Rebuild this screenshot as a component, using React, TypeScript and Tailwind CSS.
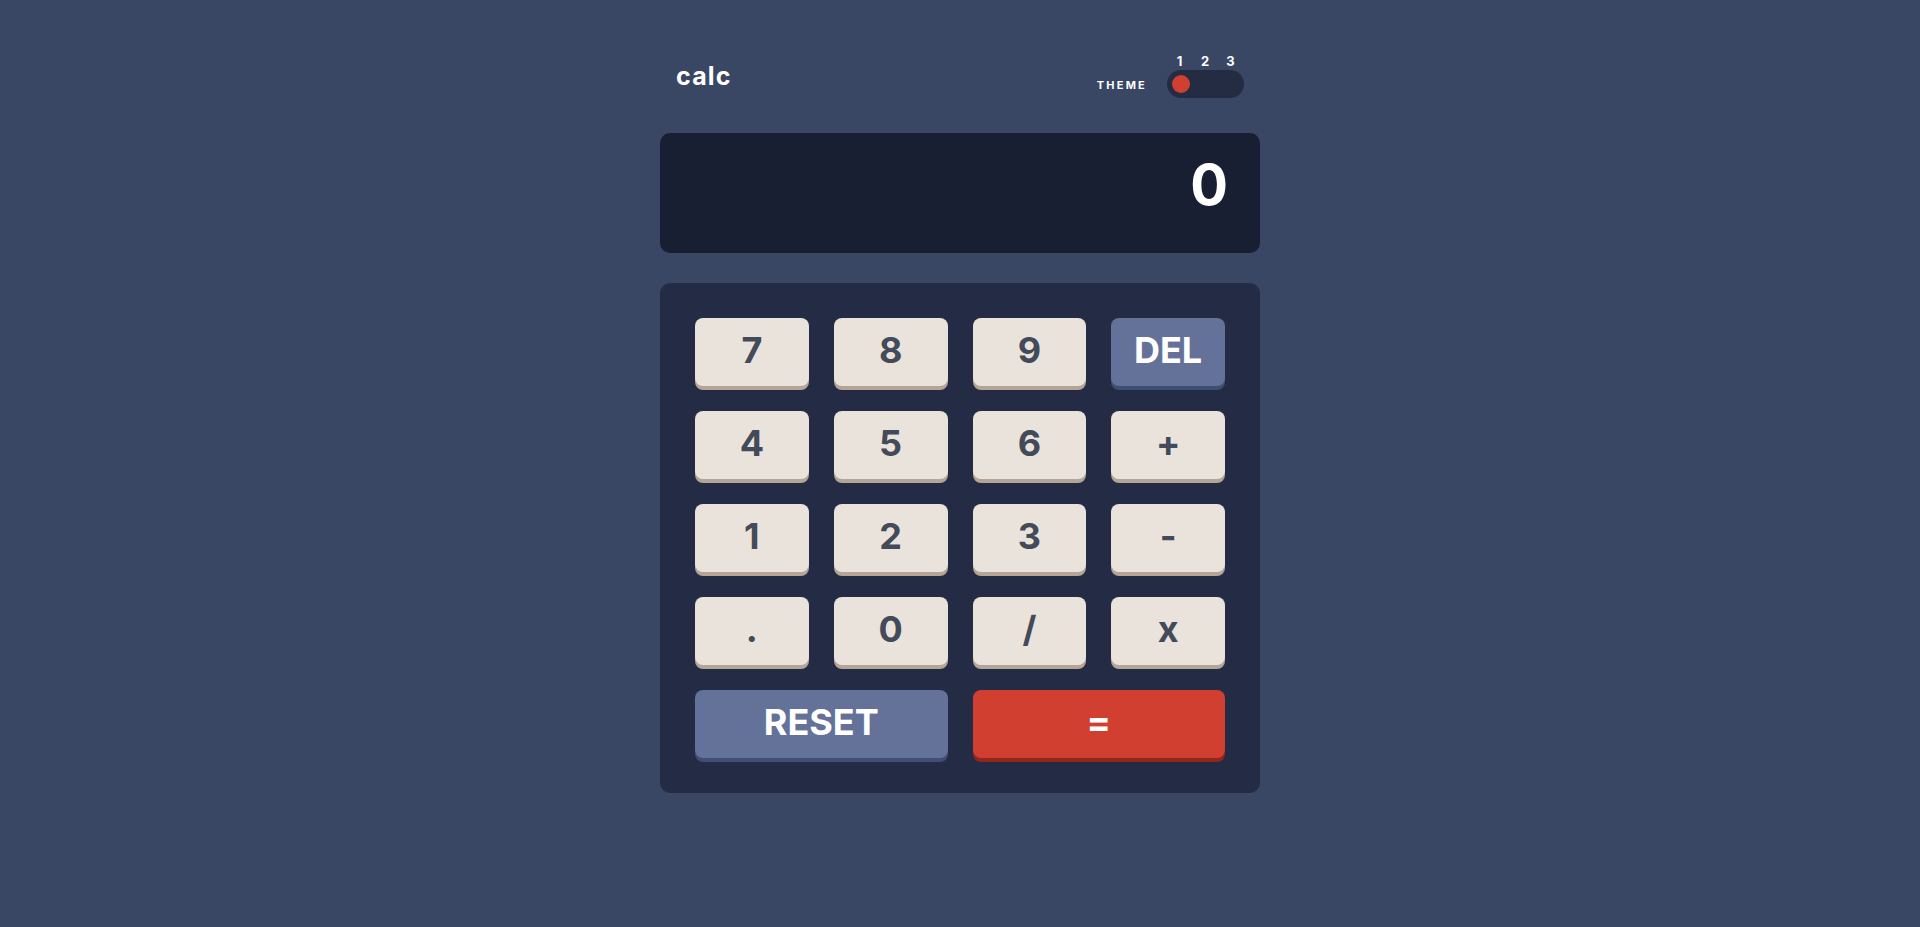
const FONT = "font-['Inter','Noto_Sans',sans-serif]";

type Key = {
  label: string;
  kind?: 'num' | 'fn' | 'eq';
  wide?: boolean;
};

const KEYS: Key[] = [
  { label: '7' },
  { label: '8' },
  { label: '9' },
  { label: 'DEL', kind: 'fn' },
  { label: '4' },
  { label: '5' },
  { label: '6' },
  { label: '+' },
  { label: '1' },
  { label: '2' },
  { label: '3' },
  { label: '-' },
  { label: '.' },
  { label: '0' },
  { label: '/' },
  { label: 'x' },
  { label: 'RESET', kind: 'fn', wide: true },
  { label: '=', kind: 'eq', wide: true },
];

function KeyButton({ k }: { k: Key }) {
  const kind = k.kind ?? 'num';
  const tone =
    kind === 'fn'
      ? 'bg-[#647198] text-white shadow-[0_4px_0_#414e73]'
      : kind === 'eq'
        ? 'bg-[#d13f30] text-white shadow-[0_4px_0_#93261a]'
        : 'bg-[#eae3dc] text-[#434a59] shadow-[0_4px_0_#b4a597]';

  return (
    <button
      type="button"
      className={`${tone} ${k.wide ? 'col-span-2' : ''} h-[68px] rounded-[8px] flex items-center justify-center pb-[4px] text-[36px] font-bold leading-none`}
    >
      {k.label}
    </button>
  );
}

export default function App() {
  return (
    <div className={`min-h-screen bg-[#3a4764] flex justify-center pt-[54px] ${FONT}`}>
      <div className="w-[600px]">
        <header className="flex items-start justify-between px-4">
          <h1 className="mt-[10px] text-[25px] font-bold leading-none tracking-[1.2px] text-white">calc</h1>

          <div className="flex items-end gap-[20px]">
            <span className="h-[28px] pt-[3px] flex items-center text-[11px] font-bold tracking-[2.2px] text-white">
              THEME
            </span>
            <div className="flex flex-col gap-[2px]">
              <div className="grid grid-cols-3 pr-[1px] text-center text-[13px] font-bold leading-[14px] text-white">
                <span>1</span>
                <span>2</span>
                <span>3</span>
              </div>
              <div className="w-[77px] h-[28px] rounded-full bg-[#232c43] p-[5px] flex items-center">
                <div className="w-[18px] h-[18px] rounded-full bg-[#d13f30]" />
              </div>
            </div>
          </div>
        </header>

        <div className="mt-[35px] h-[120px] rounded-[10px] bg-[#181f33] flex justify-end pt-[24px] pr-[32px]">
          <span className="text-[56px] font-bold leading-none text-white">0</span>
        </div>

        <div className="mt-[30px] rounded-[10px] bg-[#232c44] p-[35px] grid grid-cols-4 gap-[25px]">
          {KEYS.map((k) => (
            <KeyButton key={k.label} k={k} />
          ))}
        </div>
      </div>
    </div>
  );
}
